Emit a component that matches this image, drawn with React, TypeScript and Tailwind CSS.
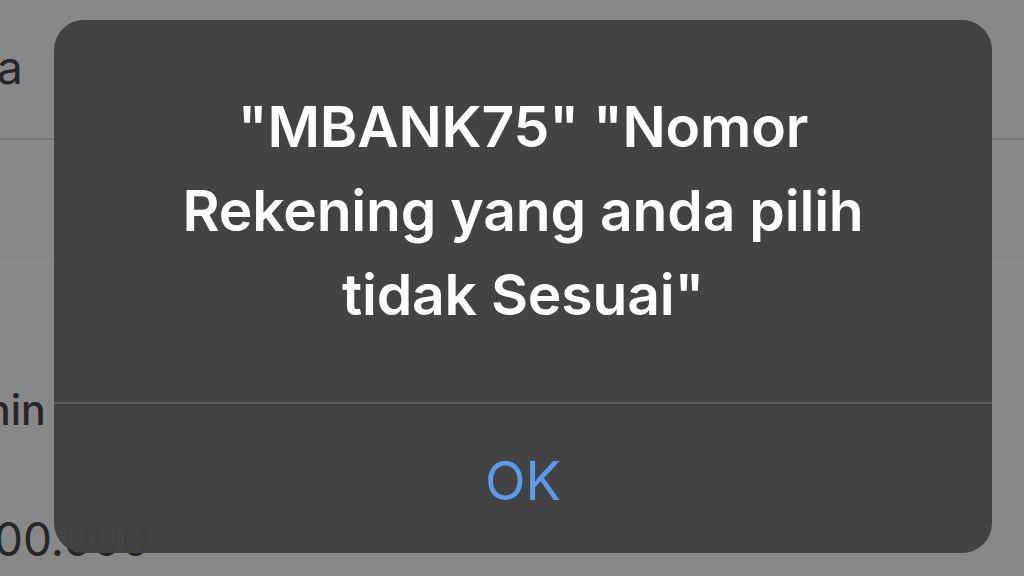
export default function App() {
  return (
    <div
      className="relative w-[1024px] h-[576px] overflow-hidden bg-[#888888]"
      style={{ fontFamily: "Inter, 'Liberation Sans', sans-serif" }}
    >
      {/* page behind the alert */}
      <div className="flex flex-col text-[#262626]">
        <div className="h-[140px] border-b-2 border-[#777777] pt-[44px]">
          <span className="block -ml-[3px] text-[46px] leading-[46px]">a</span>
        </div>
        <div className="h-[124px] border-b border-[#8f8f8f]" />
        <div className="h-[124px]" />
        <div className="pt-[1px]">
          <span className="block -ml-[14px] text-[41px] leading-[42px] font-medium">hin</span>
        </div>
        <div className="pt-[84px]">
          <span className="block -ml-[6px] text-[46px] leading-[48px]">00.000</span>
        </div>
      </div>

      {/* alert */}
      <div className="absolute left-[54px] top-[20px] w-[938px] h-[533px] rounded-[30px] bg-[#414141]/[0.98] flex flex-col">
        <div className="h-[382px] flex items-center justify-center">
          <p className="text-center text-white font-semibold text-[57px] leading-[84px] tracking-[-0.2px] w-[720px]">
            "MBANK75" "Nomor Rekening yang anda pilih tidak Sesuai"
          </p>
        </div>
        <div className="h-[2px] bg-[#5d5d5d]" />
        <div className="flex-1 flex items-center justify-center">
          <span className="text-[#5a9bec] text-[53px] leading-none pt-[6px]">OK</span>
        </div>
      </div>
    </div>
  );
}
